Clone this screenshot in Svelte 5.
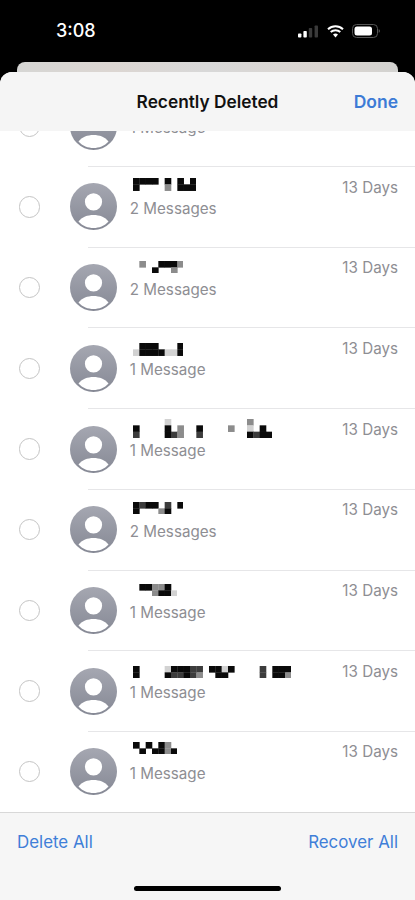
<script lang="ts">
	// mosaic cells: # black, d dark grey, g grey, l light grey
	const cell = 6.333;
	const shades = { '#': '#0a0a0a', d: '#3c3c3c', g: '#8c8c8c', l: '#d2d2d2' };

	const rows = [
		{ sub: '1 Message', top: 0, mosaic: [] },
		{ sub: '2 Messages', top: 10.8, mosaic: ['####.#.#.#', '#....g.###'] },
		{ sub: '2 Messages', top: 12.8, mosaic: ['.g..###g', '...#..g.'] },
		{ sub: '1 Message', top: 14.4, mosaic: ['.###...#', 'l####ll#'] },
		{
			sub: '1 Message',
			top: 9.7,
			mosaic: ['.....l............g', '#....#.g..#....g..l.#', 'd....#dg..d.......#d##']
		},
		{ sub: '2 Messages', top: 11.7, mosaic: ['#d##.d.#', '#...g#'] },
		{ sub: '1 Message', top: 13.3, mosaic: ['.##gg#', '...g##l'] },
		{
			sub: '1 Message',
			top: 14.6,
			mosaic: ['#....l###dd.##l#....d.###', '#....#dd#dg..##.....d.##g']
		},
		{ sub: '1 Message', top: 9.9, mosaic: ['#.#.#g', '.#.##g#'] }
	];

	const cells = (mosaic: string[]) =>
		mosaic.flatMap((line, y) =>
			[...line].flatMap((c, x) => (c === '.' ? [] : [{ x, y, fill: shades[c] }]))
		);

	const mosaicWidth = (mosaic: string[]) =>
		Math.max(0, ...mosaic.map((l) => l.length)) * cell;
</script>

<div class="phone">
	<div class="status">
		<span class="time">3:08</span>
		<div class="icons">
			<svg width="21" height="13" viewBox="0 0 21 13">
				<rect x="0" y="8.5" width="3.4" height="4" rx="0.8" fill="#fff" />
				<rect x="5.4" y="6" width="3.4" height="6.5" rx="0.8" fill="#fff" />
				<rect x="10.8" y="3" width="3.4" height="9.5" rx="0.8" fill="#3a3a3a" />
				<rect x="16.6" y="0.4" width="3.4" height="12.1" rx="0.8" fill="#3a3a3a" />
			</svg>
			<svg width="17" height="13" viewBox="0 0 17 13">
				<path d="M1 4.2C5.2 0.3 11.8 0.3 16 4.2" fill="none" stroke="#fff" stroke-width="2" />
				<path d="M3.7 7C6.4 4.5 10.6 4.5 13.3 7" fill="none" stroke="#fff" stroke-width="2" />
				<path d="M6 9.5C7.4 8.2 9.6 8.2 11 9.5L8.5 12.6Z" fill="#fff" />
			</svg>
			<svg width="28" height="14" viewBox="0 0 28 14">
				<rect x="0.5" y="0.5" width="25" height="13" rx="4" fill="none" stroke="#555" />
				<rect x="2.5" y="2.5" width="17.5" height="9" rx="2.5" fill="#fff" />
				<path d="M26.7 5.2C27.6 5.6 27.9 6.2 27.9 7S27.6 8.4 26.7 8.8Z" fill="#555" />
			</svg>
		</div>
	</div>
	<div class="peek"></div>

	<div class="sheet">
		<header class="head">
			<span class="title">Recently Deleted</span>
			<span class="done">Done</span>
		</header>

		<div class="list">
			<div class="scroll">
				{#each rows as row}
					<div class="row">
						<span class="radio"></span>
						<svg class="avatar" width="47" height="47" viewBox="0 0 47 47">
							<defs>
								<linearGradient id="av" x1="0" y1="0" x2="0" y2="1">
									<stop offset="0" stop-color="#a5a7b1" />
									<stop offset="1" stop-color="#868995" />
								</linearGradient>
							</defs>
							<circle cx="23.5" cy="23.5" r="23.5" fill="url(#av)" />
							<circle cx="23.5" cy="18.8" r="8.6" fill="#fff" />
							<path
								d="M8.5 38.5C12 34 17.5 32 23.5 32S35 34 38.5 38.5C34.5 43 29 45 23.5 45S12.5 43 8.5 38.5Z"
								fill="#fff"
							/>
						</svg>
						<div class="text">
							<div class="name">
								<svg
									class="mosaic"
									width={mosaicWidth(row.mosaic)}
									height={row.mosaic.length * cell}
									style="margin-top: {row.top}px"
								>
									{#each cells(row.mosaic) as c}
										<rect
											x={c.x * cell}
											y={c.y * cell}
											width={cell + 0.3}
											height={cell + 0.3}
											fill={c.fill}
										/>
									{/each}
								</svg>
								<span class="days">13 Days</span>
							</div>
							<div class="sub">{row.sub}</div>
						</div>
					</div>
					<div class="sep"></div>
				{/each}
			</div>
		</div>

		<footer class="foot">
			<div class="actions">
				<span>Delete All</span>
				<span>Recover All</span>
			</div>
			<div class="home"></div>
		</footer>
	</div>
</div>

<style>
	:global(body) {
		background: #000;
		font-family: Inter, 'Liberation Sans', sans-serif;
	}

	.phone {
		width: 415px;
		height: 900px;
		display: flex;
		flex-direction: column;
		overflow: hidden;
		background: #000;
	}

	.status {
		height: 62px;
		flex: none;
		display: flex;
		justify-content: space-between;
		align-items: flex-start;
		padding: 20px 35px 0 56px;
		box-sizing: border-box;
		color: #fff;
	}

	.time {
		font-size: 18px;
		font-weight: 500;
		line-height: 22px;
	}

	.icons {
		display: flex;
		align-items: center;
		gap: 8px;
		padding-top: 4px;
	}

	.peek {
		height: 10px;
		flex: none;
		margin: 0 17px;
		border-radius: 8px 8px 0 0;
		background: linear-gradient(90deg, #d6d6d4, #dcd6d2 25%, #d8d8d8 50%, #dbd5d0 80%, #d2d2d0);
	}

	.sheet {
		flex: 1;
		display: flex;
		flex-direction: column;
		min-height: 0;
		background: #fff;
		border-radius: 12px 12px 0 0;
		overflow: hidden;
	}

	.head {
		height: 59px;
		flex: none;
		display: grid;
		grid-template-columns: 1fr auto 1fr;
		align-items: center;
		padding: 0 17px;
		background: #f5f5f5;
	}

	.title {
		grid-column: 2;
		font-size: 17.3px;
		font-weight: 600;
		color: #111;
	}

	.done {
		justify-self: end;
		font-size: 17.5px;
		font-weight: 600;
		color: #3d7bd6;
	}

	.list {
		flex: 1;
		min-height: 0;
		overflow: hidden;
	}

	.scroll {
		margin-top: -44.6px;
	}

	.row {
		height: 79.7px;
		display: flex;
		align-items: center;
		padding-left: 18.7px;
		padding-right: 17px;
	}

	.radio {
		width: 19.4px;
		height: 19.4px;
		flex: none;
		border: 1.6px solid #c4c4c4;
		border-radius: 50%;
		margin-right: 29.7px;
	}

	.avatar {
		flex: none;
		margin-right: 13px;
	}

	.text {
		flex: 1;
		align-self: stretch;
		min-width: 0;
	}

	.name {
		height: 32px;
		display: flex;
		justify-content: space-between;
		align-items: flex-start;
	}

	.mosaic {
		display: block;
		margin-left: 3px;
	}

	.days {
		margin-top: 10.5px;
		font-size: 15.2px;
		line-height: 20px;
		color: #8e8e93;
		white-space: nowrap;
	}

	.sub {
		font-size: 15.2px;
		line-height: 20px;
		color: #8e8e93;
	}

	.sep {
		height: 1px;
		margin-left: 88px;
		background: #e6e6e8;
	}

	.foot {
		height: 88px;
		flex: none;
		box-sizing: border-box;
		border-top: 1px solid #d8d8d8;
		background: #f6f6f6;
		display: flex;
		flex-direction: column;
		align-items: center;
	}

	.actions {
		align-self: stretch;
		display: flex;
		justify-content: space-between;
		padding: 17px 17px 0;
		font-size: 16.9px;
		line-height: 24px;
		color: #3f7ed8;
	}

	.home {
		width: 147px;
		height: 5px;
		margin-top: 32px;
		border-radius: 3px;
		background: #000;
	}
</style>
